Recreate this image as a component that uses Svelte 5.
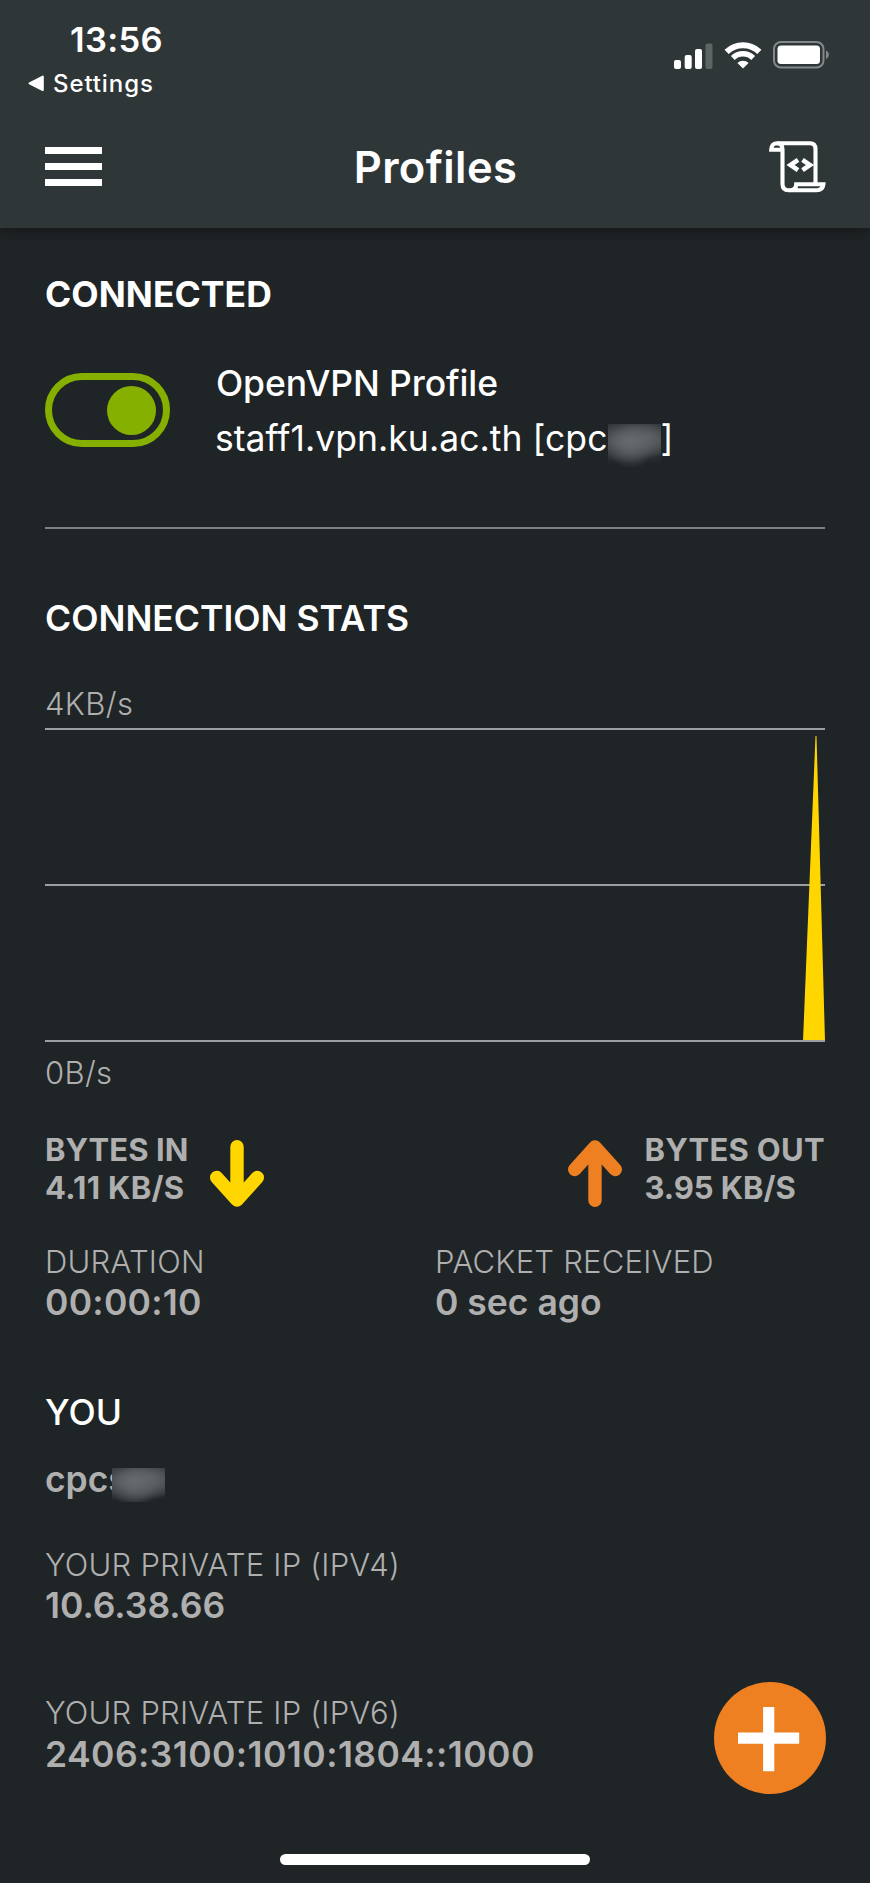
<script lang="ts">
    type Stat = {
        label: string;
        value: string;
    }

    let time = '13:56';
    let backTo = 'Settings';
    let profile = { name: 'OpenVPN Profile', host: 'staff1.vpn.ku.ac.th', user: 'cpc' };

    let session: Stat[] = [
        { label: 'DURATION', value: '00:00:10' },
        { label: 'PACKET RECEIVED', value: '0 sec ago' },
    ];

    let addresses: Stat[] = [
        { label: 'YOUR PRIVATE IP (IPV4)', value: '10.6.38.66' },
        { label: 'YOUR PRIVATE IP (IPV6)', value: '2406:3100:1010:1804::1000' },
    ];

    let connected = true;

    function toggle() {
        connected = !connected;
    }
</script>

<div class="screen">
    <header>
        <div class="status-bar">
            <div class="status-left">
                <div class="time">{time}</div>
                <div class="back">
                    <svg width="17" height="17" viewBox="0 0 17 17">
                        <path d="M1.5 8.3 L14.8 1.6 V15 Z" fill="#fff" stroke="#fff" stroke-width="2" stroke-linejoin="round" />
                    </svg>
                    <span>{backTo}</span>
                </div>
            </div>
            <div class="indicators">
                <svg width="39" height="26" viewBox="0 0 39 26">
                    <rect x="0" y="17" width="7" height="9" rx="2" fill="#fff" />
                    <rect x="10.7" y="12" width="7" height="14" rx="2" fill="#fff" />
                    <rect x="21" y="6" width="7" height="20" rx="2" fill="#fff" />
                    <rect x="31.5" y="0.5" width="7" height="25.5" rx="2" fill="#5e6364" />
                </svg>
                <svg width="38" height="28" viewBox="0 0 38 28">
                    <g fill="none" stroke="#fff" stroke-width="6">
                        <path d="M2.6 10.8 A23.5 23.5 0 0 1 35.4 10.8" />
                        <path d="M8.8 17 A14.5 14.5 0 0 1 29.2 17" stroke-width="5.4" />
                    </g>
                    <path d="M13.4 22 A8 8 0 0 1 24.6 22 L19 27.6 Z" fill="#fff" />
                </svg>
                <svg width="57" height="28" viewBox="0 0 57 28">
                    <rect x="1" y="1" width="49.5" height="25.5" rx="7" fill="none" stroke="#83888a" stroke-width="2" />
                    <rect x="4.5" y="4.5" width="42.5" height="18.5" rx="3.5" fill="#fff" />
                    <path d="M53 9.3 Q56 11 56 13.8 Q56 16.6 53 18.3 Z" fill="#83888a" />
                </svg>
            </div>
        </div>
        <div class="toolbar">
            <svg class="menu" width="57" height="39" viewBox="0 0 57 39">
                <path d="M0 3.5 H57 M0 19.5 H57 M0 35.5 H57" stroke="#fff" stroke-width="6.8" />
            </svg>
            <h1>Profiles</h1>
            <svg class="log" width="57" height="52" viewBox="0 0 57 52" fill="none" stroke="#fff" stroke-width="4.1">
                <path d="M8.5 2.2 H41 Q46.5 2.2 46.5 8 V43" />
                <path d="M13.2 8.8 H2.2 Q2.2 2.2 8.5 2.2 Q13.5 2.6 13.5 8.5 V43 Q13.5 49.2 19.5 49.2 H47.5 Q53.8 49.2 54.4 43.2 H27.2 Q27.2 49.2 20.5 49.2" />
                <path d="M29 18.8 L21.5 24 L29 29.2 M33.5 18.8 L41 24 L33.5 29.2" stroke-width="4.6" />
            </svg>
        </div>
    </header>

    <main>
        <h2 class="heavy">CONNECTED</h2>
        <div class="profile">
            <button class="switch" class:off={!connected} on:click={toggle} aria-label="Connection">
                <span class="knob"></span>
            </button>
            <div class="profile-text">
                <div class="profile-name">{profile.name}</div>
                <div class="profile-host">{profile.host} [{profile.user}<span class="smudge"></span>]</div>
            </div>
        </div>
        <hr>

        <h2 class="stats-title">CONNECTION STATS</h2>
        <div class="scale top">4KB/s</div>
        <svg class="chart" width="780" height="314" viewBox="0 0 780 314">
            <path d="M0 1 H780 M0 157 H780" stroke="#9b9fa1" stroke-width="2" />
            <path d="M770.5 8 L771.5 8 L780 313 H758 Z" fill="#ffd600" />
            <path d="M0 313 H780" stroke="#9b9fa1" stroke-width="2" />
        </svg>
        <div class="scale bottom">0B/s</div>

        <div class="traffic">
            <div class="bytes">
                <div>BYTES IN<br><span class="rate-in">4.11 KB/S</span></div>
                <svg width="54" height="67" viewBox="0 0 54 67">
                    <path d="M27 6.7 V59 M6.7 37.5 L27 60 L47.3 37.5" fill="none" stroke="#ffd600" stroke-width="13.4" stroke-linecap="round" stroke-linejoin="round" />
                </svg>
            </div>
            <div class="bytes out">
                <svg width="54" height="67" viewBox="0 0 54 67">
                    <path d="M27 60.3 V8 M6.7 29.5 L27 7 L47.3 29.5" fill="none" stroke="#ee8022" stroke-width="13.4" stroke-linecap="round" stroke-linejoin="round" />
                </svg>
                <div>BYTES OUT<br><span class="rate-out">3.95 KB/S</span></div>
            </div>
        </div>

        <div class="session">
            {#each session as stat}
                <div>
                    <div class="label">{stat.label}</div>
                    <div class="value" class:clock={stat.value.includes(':')}>{stat.value}</div>
                </div>
            {/each}
        </div>

        <h2 class="you">YOU</h2>
        <div class="user">{profile.user}s<span class="smudge"></span></div>

        <div class="addresses">
            {#each addresses as stat}
                <div>
                    <div class="label">{stat.label}</div>
                    <div class="value" class:wide={stat.value.includes('::')}>{stat.value}</div>
                </div>
            {/each}
        </div>
    </main>

    <button class="add" aria-label="Add profile">
        <svg width="112" height="112" viewBox="0 0 112 112">
            <path d="M24 56.2 H85.2 M54.7 25 V89.3" stroke="#fff" stroke-width="11.2" />
        </svg>
    </button>
    <div class="home-bar"></div>
</div>

<style>
    :global(body) {
        background: #1f2426;
    }
    .screen {
        position: relative;
        width: 870px;
        height: 1883px;
        overflow: hidden;
        background: #1f2426;
        color: #fff;
        font-family: Inter, "Liberation Sans", sans-serif;
        font-size: 35.5px;
    }
    svg {
        display: block;
        flex: none;
    }
    header {
        box-sizing: border-box;
        height: 228px;
        padding-top: 19px;
        background: #2f3638;
        box-shadow: 0 2px 14px rgba(0, 0, 0, .4);
    }
    .status-bar {
        display: flex;
        justify-content: space-between;
        height: 87px;
        padding: 0 40px 0 28px;
    }
    .time {
        padding-left: 42px;
        font-size: 34.5px;
        font-weight: 600;
        line-height: 42px;
        letter-spacing: .3px;
    }
    .back {
        display: flex;
        align-items: center;
        gap: 8px;
        font-size: 24px;
        font-weight: 450;
        line-height: 45px;
        letter-spacing: .9px;
    }
    .indicators {
        display: flex;
        align-items: flex-end;
        gap: 11px;
        height: 50px;
    }
    .toolbar {
        display: flex;
        justify-content: space-between;
        align-items: center;
        height: 121px;
        padding: 0 44px 0 45px;
    }
    h1 {
        margin: 0;
        font-size: 43.5px;
        font-weight: 600;
        letter-spacing: .4px;
    }
    main {
        padding: 45px 45px 0;
    }
    h2 {
        margin: 0;
        font-size: 35.5px;
        font-weight: 600;
        line-height: 44px;
    }
    .heavy {
        font-weight: 700;
        letter-spacing: .05px;
    }
    .profile {
        display: flex;
        align-items: center;
        gap: 45px;
        height: 110px;
        margin-top: 38px;
    }
    .switch {
        box-sizing: border-box;
        display: flex;
        justify-content: flex-end;
        align-items: center;
        width: 125px;
        height: 74px;
        padding: 0 7px;
        border: 7px solid #86b000;
        border-radius: 37px;
        background: none;
    }
    .switch.off {
        justify-content: flex-start;
    }
    .knob {
        width: 49px;
        height: 49px;
        border-radius: 50%;
        background: #86b000;
    }
    .profile-text {
        padding-top: 2px;
        line-height: 55px;
        white-space: nowrap;
    }
    .profile-name {
        padding-left: 1px;
        font-weight: 500;
        letter-spacing: -.1px;
    }
    .profile-host {
        display: flex;
        white-space: pre;
        letter-spacing: .04px;
    }
    .smudge {
        width: 53px;
        height: 43px;
        background:
            radial-gradient(ellipse 40px 22px at 40% 40%, #676b6d, transparent),
            radial-gradient(ellipse 36px 20px at 72% 32%, #575b5d, transparent),
            radial-gradient(circle 22px at 43% 55%, #4b5052, transparent),
            linear-gradient(#2b3032, #3a3f41 40%, #1f2426 95%);
    }
    .profile-host .smudge {
        margin: 13px -1px 0 1px;
    }
    hr {
        height: 2px;
        margin: 62px 0 0;
        border: 0;
        background: #7d7f81;
    }
    .stats-title {
        margin-top: 68px;
    }
    .scale {
        font-size: 31px;
        font-weight: 350;
        line-height: 40px;
        letter-spacing: .35px;
        color: #afafaf;
    }
    .scale.top {
        margin: 43px 0 4px;
    }
    .scale.bottom {
        margin-top: 11px;
    }
    .traffic {
        display: flex;
        justify-content: space-between;
        margin-top: 38px;
        font-size: 31px;
        font-weight: 700;
        line-height: 38px;
        letter-spacing: .05px;
        color: #afafaf;
    }
    .bytes {
        display: flex;
        align-items: flex-end;
        gap: 22px;
    }
    .bytes.out {
        letter-spacing: .3px;
    }
    .rate-in {
        letter-spacing: .3px;
    }
    .rate-out {
        letter-spacing: -.05px;
    }
    .session {
        display: grid;
        grid-template-columns: 1fr 1fr;
        margin-top: 35px;
    }
    .label {
        font-size: 31px;
        font-weight: 350;
        line-height: 40px;
        letter-spacing: .22px;
        color: #afafaf;
    }
    .value {
        font-weight: 600;
        line-height: 41px;
        color: #afafaf;
    }
    .value.clock {
        letter-spacing: .24px;
    }
    .value.wide {
        line-height: 43px;
        letter-spacing: .42px;
    }
    .you {
        margin-top: 68px;
        font-weight: 550;
        letter-spacing: .05px;
    }
    .user {
        display: flex;
        height: 44px;
        margin-top: 23px;
        font-weight: 600;
        line-height: 44px;
        letter-spacing: -.1px;
        color: #afafaf;
    }
    .user .smudge {
        height: 34px;
        margin: 10px 0 0 -16px;
        z-index: 1;
    }
    .addresses {
        display: grid;
        gap: 67px;
        margin-top: 43px;
    }
    .add {
        position: absolute;
        left: 714px;
        top: 1682px;
        width: 112px;
        height: 112px;
        padding: 0;
        border: 0;
        border-radius: 50%;
        background: #ee8022;
    }
    .home-bar {
        position: absolute;
        left: 280px;
        bottom: 18px;
        width: 310px;
        height: 11px;
        border-radius: 6px;
        background: #fff;
    }
</style>
